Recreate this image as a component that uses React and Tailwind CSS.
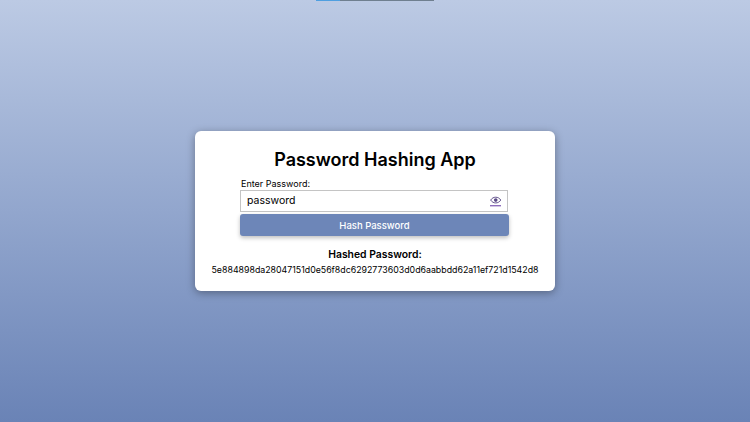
import { useState } from 'react';

const font = "font-['Inter','Liberation_Sans',sans-serif]";

function EyeIcon() {
  return (
    <svg width="12" height="11" viewBox="0 0 12 11" fill="none" className="mt-[1px] block">
      <path d="M0.7 4C2 2 3.9 1 6 1s4 1 5.3 3C10 6 8.1 7 6 7S2 6 0.7 4Z" stroke="#5b4a86" strokeWidth="1" />
      <circle cx="6" cy="4" r="1.9" fill="#5b4a86" />
      <rect x="0" y="9.5" width="12" height="1" fill="#5b2d9e" />
    </svg>
  );
}

export default function App() {
  const [password, setPassword] = useState('password');

  return (
    <div className={`${font} relative flex h-[422px] w-[750px] items-center justify-center overflow-hidden bg-gradient-to-b from-[#bccae4] to-[#6a83b6]`}>
      <div className="absolute left-[316px] top-0 flex h-px w-[118px]">
        <div className="w-6 bg-[#4f9fe0]" />
        <div className="flex-1 bg-[#6f7f8f]" />
      </div>

      <div className="flex h-[160px] w-[360px] flex-col items-center rounded-md bg-white pt-[17px] shadow-[0_2px_8px_rgba(0,0,0,0.35)]">
        <h1 className="text-[18px] leading-6 font-semibold text-black">Password Hashing App</h1>

        <div className="mt-[5px] ml-[45px] flex w-[269px] flex-col self-start">
          <label className="pl-[1px] text-[9px] leading-[13px] text-black">Enter Password:</label>
          <div className="mr-[1px] flex h-[22px] items-center justify-between border border-[#c4c4c4] pr-[6px] pl-[6px]">
            <input
              value={password}
              onChange={(e) => setPassword(e.target.value)}
              className="w-full bg-transparent text-[10.5px] text-black outline-none"
            />
            <EyeIcon />
          </div>
          <button className="mt-[2px] h-[22px] rounded-[3px] bg-[#6d86b8] pt-[2px] text-[9.5px] font-medium text-white shadow-[0_2px_4px_rgba(0,0,0,0.25)]">
            Hash Password
          </button>
        </div>

        <h2 className="mt-[11px] text-[10.4px] leading-4 font-semibold text-black">Hashed Password:</h2>
        <p className="text-[8.8px] leading-[13px] text-black">5e884898da28047151d0e56f8dc6292773603d0d6aabbdd62a11ef721d1542d8</p>
      </div>
    </div>
  );
}
